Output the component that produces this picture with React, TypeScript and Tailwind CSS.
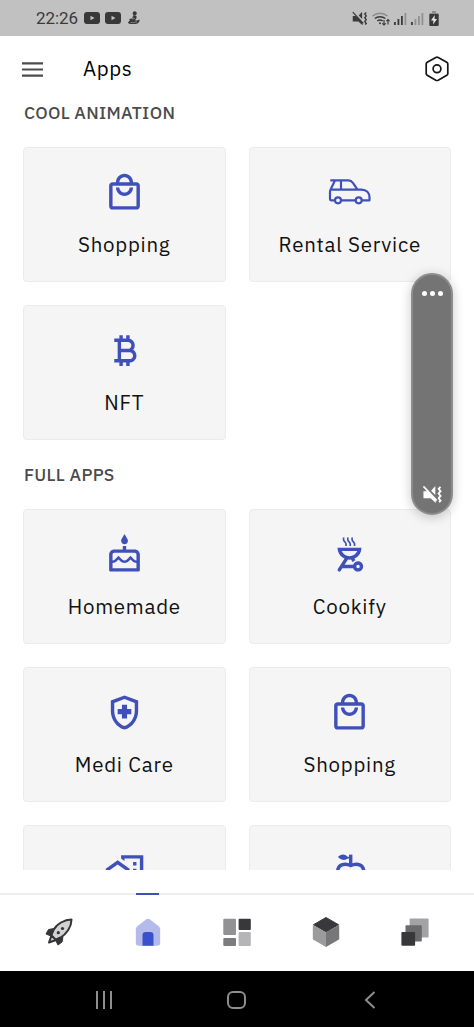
import React from 'react';
import {
  MdCurrencyBitcoin,
  MdOutlineCake,
  MdOutlineHealthAndSafety,
  MdOutlineHomeWork,
  MdOutlineLocalMall,
  MdOutlineOutdoorGrill,
} from 'react-icons/md';

interface AppItem {
  label: string;
  icon: React.ReactNode;
}

const iconClass = 'w-[41px] h-[41px]';

const CarIcon = () => (
  <svg viewBox="0.5 0 44 41" className="w-[44px] h-[41px]" fill="none" stroke="currentColor" strokeWidth="2.2" strokeLinejoin="round">
    <path d="M2.8 8.4H21c2.3 0 3.4 1 4.6 2.7L30 17.6M7.5 8.6 3.3 17c-.6 1-.8 1.8-.8 3v6.8c0 1 .5 1.5 1.5 1.500h3.300M13.500 8.400v9.200M3 17.600h31c5 0 8 3.200 8 8v2.700h-7.500M13.800 28.300H28" />
    <circle cx="10.5" cy="28.3" r="3" />
    <circle cx="31.2" cy="28.3" r="3" />
  </svg>
);

const AppleIcon = () => (
  <svg viewBox="0 0 24 24" className={iconClass} fill="none">
    <path d="M11.2 4.6c-1 1.6-3.8 1.8-6-.5 1.7-2 4.7-2 6 .5Z" fill="currentColor" />
    <path d="M10.500 4.500h2.200" stroke="currentColor" strokeWidth="1" />
    <path d="M12.700 2.700v6" stroke="currentColor" strokeWidth="2" />
    <path d="M12.700 9.100C9 7.400 5 8.500 5 13c0 4 3 8.500 5.500 8.500 1 0 1-.5 2.200-.5s1.200.5 2.200.5c2.500 0 5.500-4.500 5.500-8.500 0-4.500-4-5.600-7.700-3.900Z" stroke="currentColor" strokeWidth="2" />
  </svg>
);

const MuteVibrateIcon = ({ className }: { className: string }) => (
  <svg viewBox="0 0 20 20" className={className} fill="currentColor">
    <path d="M1 6.500h4l9 9V19l-5.500-5H1Z" />
    <path d="M13.500 1v9.500L9 6Z" />
    <path d="m1 1.500 14 15" stroke="currentColor" strokeWidth="1.700" />
    <path d="m19 2-2 2 2 2.500-2 2.500 2 2.500-2 2.500 2 2.500-1.500 1.500" fill="none" stroke="currentColor" strokeWidth="1.900" />
  </svg>
);

const PlayIcon = () => (
  <svg viewBox="0 0 16 12" className="w-4 h-3">
    <rect width="16" height="12" rx="3" fill="#383838" />
    <path d="m6.500 3.700 4 2.300-4 2.300Z" fill="#c1c1c1" />
  </svg>
);

const SignalIcon = ({ level }: { level: number }) => (
  <svg viewBox="0 0 13 13" className="w-[13px] h-[13px]" fill="#3a3a3a">
    <rect x="0" y="10" width="1.8" height="3" />
    <rect x="3.500" y="7" width="1.8" height="6" opacity={level > 1 ? 1 : 0.35} />
    <rect x="7" y="4" width="1.8" height="9" opacity={level > 2 ? 1 : 0.35} />
    <rect x="10.500" y="1" width="1.8" height="12" opacity="0.35" />
  </svg>
);

const StatusBar = () => (
  <div className="h-9 shrink-0 bg-[#c1c1c1] flex items-center justify-between pl-9 pr-[35px] text-[#3a3a3a]">
    <div className="flex items-center gap-[5px]">
      <span className="font-[Roboto,sans-serif] text-[17px] leading-none tracking-[-0.1px] w-[43px] pt-px">22:26</span>
      <PlayIcon />
      <PlayIcon />
      <svg viewBox="0 0 12 14" className="w-3 h-[14px] ml-[2px]" fill="#383838">
        <circle cx="6.700" cy="2.300" r="2" />
        <path d="M5 4.500c2.500-.5 4 0 3.500 2.500L7 9.500h2l2.500-1c.5 3.500-3 5-6.500 4.500-3 0-5-.5-5-1.500l2-2.500L1 8l3-.500Z" />
        <path d="M5 5.500 4.500 8 7 7.500M2.500 11.200c2 .7 4 .5 6.500-.5" fill="none" stroke="#c1c1c1" strokeWidth=".5" />
      </svg>
    </div>
    <div className="flex items-center">
      <MuteVibrateIcon className="w-[15px] h-[15px]" />
      <svg viewBox="0 0 18 14" className="w-[18px] h-[14px] ml-[5px] mr-1 mt-px" fill="none" stroke="currentColor" strokeWidth="1.500">
        <path d="M.5 4C5 .3 11 .3 15.500 4" opacity=".4" />
        <path d="M2.800 6.500c3-2.500 7.500-2.500 10.500 0M5.300 9c1.700-1.300 3.700-1.300 5.400 0" />
        <circle cx="8" cy="11.300" r="1" fill="currentColor" stroke="none" />
        <path d="M12 8v5m-1.700-1.700L12 13l1.700-1.700M16 12.500v-5m-1.600 1.600L16 7.500l1.600 1.600" strokeWidth="1.100" />
      </svg>
      <SignalIcon level={3} />
      <div className="w-1" />
      <SignalIcon level={1} />
      <svg viewBox="0 0 10 15" className="w-[10px] h-[15px] ml-[5px]">
        <path d="M3 0h4v2h2.500v3h-9V2H3Z" fill="#8d8d8d" />
        <rect x=".3" y="3" width="9.400" height="12" rx="1" fill="#383838" />
        <path d="M5.800 4 2 9.500h2.500L4 13.500 8 8H5.500Z" fill="#e8e8e8" />
      </svg>
    </div>
  </div>
);

const Header = () => (
  <header className="h-[66px] shrink-0 flex items-center pl-[22px] pr-[25px]">
    <svg viewBox="0 0 21 15" className="w-[21px] h-[15px]" stroke="#4d4d4d" strokeWidth="2.200">
      <path d="M0 1.300h21M0 7.500h21M0 13.700h21" />
    </svg>
    <h1 className="ml-10 text-[20.5px] text-black tracking-[0.6px]">Apps</h1>
    <svg viewBox="0 0 24 26" className="w-6 h-[26px] ml-auto" fill="none" stroke="#161616" strokeWidth="1.700" strokeLinejoin="round">
      <path d="M12 1.200c.5 0 .8.100 1.200.3l8.600 4.800c.7.400 1 .9 1 1.600v9.800c0 .7-.3 1.200-1 1.600l-8.600 4.900c-.8.400-1.600.4-2.400 0l-8.600-4.900c-.7-.4-1-.9-1-1.600V7.900c0-.7.3-1.200 1-1.600l8.600-4.800c.4-.2.7-.3 1.200-.3Z" />
      <circle cx="12" cy="12.800" r="3.900" />
    </svg>
  </header>
);

const coolAnimation: AppItem[] = [
  { label: 'Shopping', icon: <MdOutlineLocalMall className={iconClass} /> },
  { label: 'Rental Service', icon: <CarIcon /> },
  { label: 'NFT', icon: <MdCurrencyBitcoin className={iconClass} /> },
];

const fullApps: AppItem[] = [
  { label: 'Homemade', icon: <MdOutlineCake className={iconClass} /> },
  { label: 'Cookify', icon: <MdOutlineOutdoorGrill className={iconClass} /> },
  { label: 'Medi Care', icon: <MdOutlineHealthAndSafety className={iconClass} /> },
  { label: 'Shopping', icon: <MdOutlineLocalMall className={iconClass} /> },
  { label: '', icon: <MdOutlineHomeWork className={iconClass} /> },
  { label: '', icon: <AppleIcon /> },
];

const Section = ({ title, items }: { title: string; items: AppItem[] }) => (
  <section>
    <h2 className="h-[21px] leading-[21px] pl-px text-[17.500px] font-medium text-[#4b4b4b] tracking-[0.3px]">{title}</h2>
    <div className="grid grid-cols-2 gap-[23px] mt-6">
      {items.map((item, i) => (
        <div key={i} className="h-[135px] rounded bg-[#f5f5f5] border border-[#ebebeb] flex flex-col items-center pt-6 text-[#3f51b9]">
          {item.icon}
          <span className="mt-[18px] h-7 leading-7 text-[20.5px] text-[#111111] tracking-[0.75px] whitespace-nowrap">{item.label}</span>
        </div>
      ))}
    </div>
  </section>
);

const RocketIcon = () => (
  <svg viewBox="0 0 28 28" className="w-7 h-7" stroke="#353538" strokeWidth="2" strokeLinejoin="round">
    <path d="m9 10.500-5.500 1L1 16l5 2ZM18 18.500l-1 5.500-4 3-2.500-5Z" fill="#353538" strokeWidth="1" />
    <path d="M26.500 1.500C19.500 1.500 11.500 6 8.500 12L6 18l4 4 5.500-2.500C21.500 16 26.500 9 26.500 1.500Z" fill="#d2d2d3" />
    <path d="m6.500 17.500-2.500 7 7-2.500Z" fill="#d2d2d3" />
    <circle cx="17.500" cy="10.500" r="1.600" fill="#353538" stroke="none" />
    <circle cx="13.300" cy="14.700" r="1.600" fill="#353538" stroke="none" />
  </svg>
);

const BottomNav = () => (
  <nav className="h-[78px] shrink-0 border-t-2 border-[#eeeeee] grid grid-cols-5 px-[14px] pb-[2px]">
    <div className="flex items-center justify-center">
      <RocketIcon />
    </div>
    <div className="relative flex items-center justify-center">
      <div className="absolute -top-[2px] w-[23px] h-[2px] bg-[#3f51b5]" />
      <svg viewBox="0 0 26 28" className="w-[26px] h-7">
        <path d="M11 1.500c1.300-1 2.700-1 4 0l9 7c.8.700 1.200 1.500 1.200 2.500v14c0 1.800-1 2.800-2.800 2.800H3.600c-1.800 0-2.800-1-2.800-2.800V11c0-1 .4-1.800 1.200-2.500Z" fill="#b3bbea" />
        <path d="M7.500 27.800V17c0-2 1.200-3 3-3h5c1.800 0 3 1 3 3v10.800Z" fill="#3c50cc" />
      </svg>
    </div>
    <div className="flex items-center justify-center">
      <svg viewBox="0 0 28 28" className="w-7 h-7">
        <rect x=".3" y=".8" width="12.700" height="16.200" rx="1" fill="#929294" />
        <rect x=".3" y="20" width="12.700" height="8" rx="1" fill="#7c7c7e" />
        <rect x="15.600" y=".8" width="12.200" height="11.200" rx="1" fill="#38383b" />
        <rect x="15.600" y="14" width="12.200" height="14" rx="1" fill="#b5b5b7" />
      </svg>
    </div>
    <div className="flex items-center justify-center">
      <svg viewBox="0 0 28 30" className="w-7 h-[30px]">
        <path d="m14 .5 12.500 7.200L14 15 1.500 7.700Z" fill="#38383b" stroke="#38383b" strokeLinejoin="round" />
        <path d="M.8 8 14 15.300V30L1.500 22.800c-.5-.300-.7-.6-.7-1.100Z" fill="#9b9b9d" />
        <path d="M27.200 8 14 15.300V30l12.500-7.200c.5-.300.7-.6.700-1.100Z" fill="#77777a" />
      </svg>
    </div>
    <div className="flex items-center justify-center">
      <svg viewBox="0 0 28 28" className="w-7 h-7">
        <rect x="8.600" y=".5" width="19" height="19" rx="1" fill="#a3a3a5" />
        <rect x="4.500" y="7.300" width="16.300" height="16.300" rx="1" fill="#6b6b6e" />
        <rect x=".4" y="14" width="13.700" height="13.700" rx="1" fill="#38383b" />
      </svg>
    </div>
  </nav>
);

const SystemNav = () => (
  <div className="h-[56px] shrink-0 bg-black grid grid-cols-[208px_57px_209px] items-center pt-[2px] text-[#8e8e8e]">
    <div className="flex justify-center gap-[5px]">
      <div className="w-[2px] h-[18px] bg-current" />
      <div className="w-[2px] h-[18px] bg-current" />
      <div className="w-[2px] h-[18px] bg-current" />
    </div>
    <div className="flex justify-center">
      <div className="w-[19px] h-[18px] rounded-[6px] border-2 border-current" />
    </div>
    <div className="flex justify-center">
      <svg viewBox="0 0 12 18" className="w-3 h-[18px]" fill="none" stroke="currentColor" strokeWidth="2">
        <path d="m10.500 1-8.500 8 8.500 8" />
      </svg>
    </div>
  </div>
);

const VolumeOverlay = () => (
  <div className="absolute left-[411px] top-[273px] w-[42px] h-[242px] rounded-full bg-[#747474] border-2 border-[#8c8c8c] shadow-[0_2px_12px_rgba(0,0,0,0.22)] flex flex-col items-center justify-between pt-4 pb-[9px] text-white">
    <div className="flex gap-[3px]">
      <div className="w-[5px] h-[5px] rounded-full bg-white" />
      <div className="w-[5px] h-[5px] rounded-full bg-white" />
      <div className="w-[5px] h-[5px] rounded-full bg-white" />
    </div>
    <MuteVibrateIcon className="w-5 h-[19px]" />
  </div>
);

export default function App() {
  return (
    <div className="relative w-[474px] h-[1027px] bg-white flex flex-col overflow-hidden font-['IBM_Plex_Sans',Roboto,sans-serif]">
      <StatusBar />
      <Header />
      <main className="h-[768px] shrink-0 overflow-hidden px-[23px] flex flex-col gap-6">
        <Section title="COOL ANIMATION" items={coolAnimation} />
        <Section title="FULL APPS" items={fullApps} />
      </main>
      <div className="h-[23px] shrink-0" />
      <BottomNav />
      <SystemNav />
      <VolumeOverlay />
    </div>
  );
}
